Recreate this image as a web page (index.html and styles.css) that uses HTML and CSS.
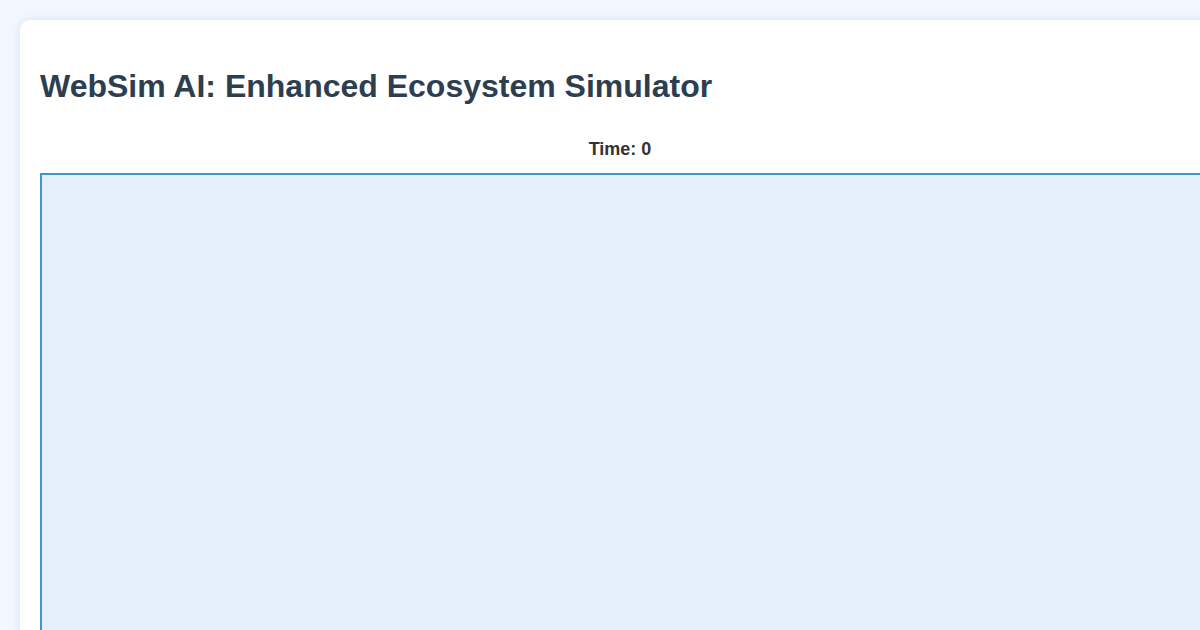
FILE: index.html
```html
<!DOCTYPE html>
<html>
<head>
<meta charset="utf-8">
<link rel="stylesheet" href="styles.css">
</head>
<body>
<div class="container">
  <h1 class="title">WebSim AI: Enhanced Ecosystem Simulator</h1>
  <div class="stats">Time: 0</div>
  <div class="canvas"></div>
</div>
</body>
</html>
```
FILE: styles.css
```css
html, body {
  margin: 0;
  padding: 0;
}
body {
  background: #f0f7ff;
  font-family: "Liberation Sans", Arial, sans-serif;
  padding: 20px;
  width: 1200px;
}
.container {
  background: #ffffff;
  border-radius: 10px;
  box-shadow: 0 0 10px rgba(0, 0, 0, 0.1);
  padding: 20px;
  width: 1160px;
}
.title {
  color: #2c3e50;
  font-size: 32px;
  font-weight: bold;
  margin: 28px 0 0 0;
}
.stats {
  text-align: center;
  color: #333333;
  font-size: 18px;
  font-weight: bold;
  margin: 34px 0 13px 0;
}
.canvas {
  border: 2px solid #4096cf;
  background: #e4f1fd;
  height: 600px;
  width: 1200px;
}
```
